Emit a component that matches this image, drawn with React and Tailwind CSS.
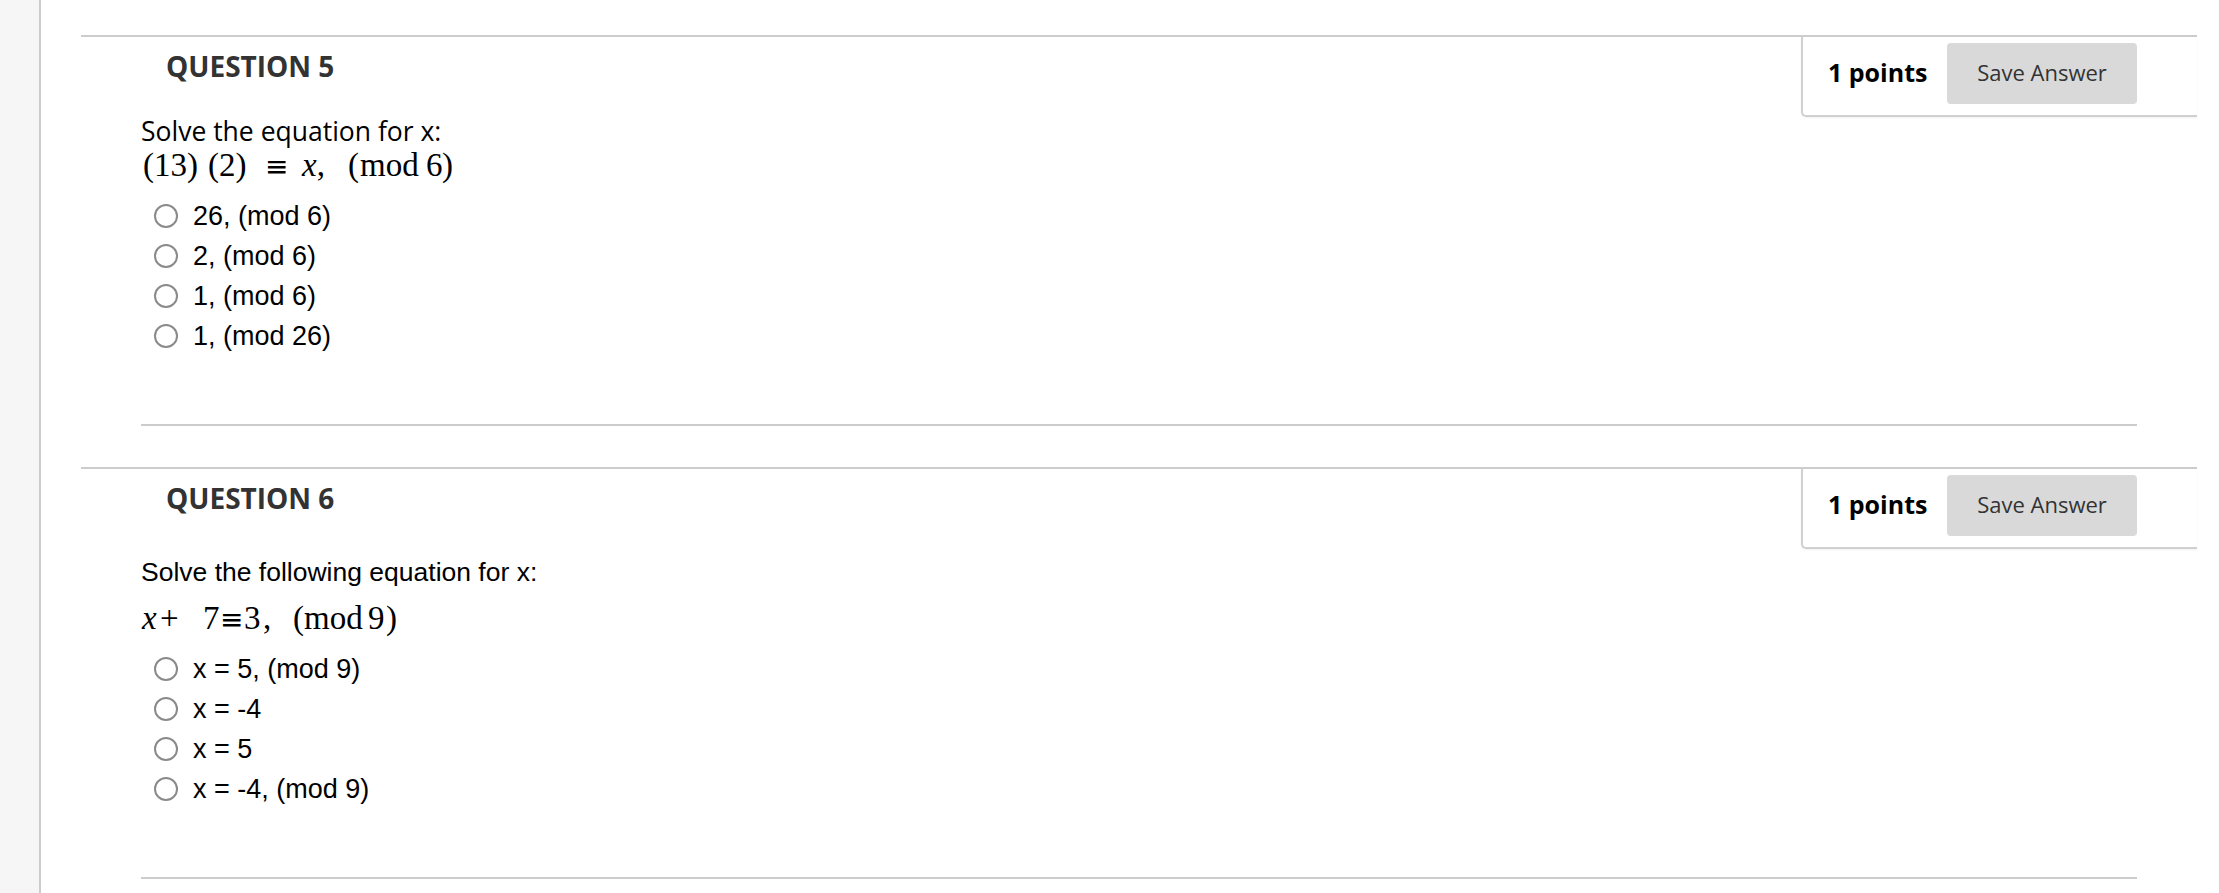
import React from "react";

const OPEN = "font-['Open_Sans',sans-serif]";
const ARIAL = "font-['Liberation_Sans',Arial,sans-serif]";
const SERIF = "font-['Liberation_Serif','Times_New_Roman',serif]";
const EQUIV = "font-['DejaVu_Sans',sans-serif] text-[28px]";

function PointsBox() {
  return (
    <div className={`flex w-[396px] shrink-0 items-center rounded-bl-[5px] border-b-2 border-l-2 border-[#d0d0d0] pb-[11px] pl-[25px] pr-[60px] pt-[6px] shadow-[0_1px_2px_rgba(0,0,0,0.06)] ${OPEN}`}>
      <span className="-mt-[3px] text-[25px] font-bold leading-none text-black">1 points</span>
      <button className="ml-auto h-[61px] w-[190px] rounded-[4px] bg-[#d9d9d9] pb-[3px] text-[22px] leading-none text-[#333333]">
        Save Answer
      </button>
    </div>
  );
}

function Radio() {
  return <span className="h-[24px] w-[24px] shrink-0 rounded-full border-2 border-[#8a8a8a] bg-white" />;
}

function Options({ items }) {
  return (
    <div className="flex flex-col pl-[13px]">
      {items.map((t) => (
        <label key={t} className="flex h-[40px] items-center gap-[15px]">
          <Radio />
          <span className={`${ARIAL} text-[27px] leading-[40px] text-black`}>{t}</span>
        </label>
      ))}
    </div>
  );
}

function Tok({ w, children, cls = "" }) {
  return (
    <span className={`inline-block ${cls}`} style={w ? { width: w } : undefined}>
      {children}
    </span>
  );
}

function Question({ num, children }) {
  return (
    <section className="border-t-2 border-[#cccccc]">
      <div className="flex items-start justify-between">
        <h2 className={`${OPEN} mt-[15px] pl-[85px] text-[28px] font-bold leading-[28px] text-[#333333]`}>
          QUESTION {num}
        </h2>
        <PointsBox />
      </div>
      <div className="px-[60px]">
        {children}
        <div className="mt-[68px] h-[2px] bg-[#cccccc]" />
      </div>
    </section>
  );
}

export default function App() {
  return (
    <div className="flex min-h-[893px] w-full bg-white">
      <div className="w-[41px] shrink-0 border-r-2 border-[#cccccc] bg-[#f6f6f6]" />
      <main className="flex-1 pl-[40px] pr-[22px] pt-[35px]">
        <Question num={5}>
          <p className={`${OPEN} text-[26.5px] leading-[28px] text-black`}>Solve the equation for x:</p>
          <div className={`${SERIF} whitespace-nowrap pl-[2px] text-[33px] leading-[40px] text-black`}>
            <Tok w={65}>(13)</Tok>
            <Tok w={57}>(2)</Tok>
            <Tok w={37} cls={EQUIV}>≡</Tok>
            <Tok w={46}>
              <span className="italic">x</span>,
            </Tok>
            <Tok w={12}>(</Tok>
            <Tok w={66}>mod</Tok>
            <Tok w={16}>6</Tok>
            <Tok>)</Tok>
          </div>
          <div className="mt-[9px]">
            <Options items={["26, (mod 6)", "2, (mod 6)", "1, (mod 6)", "1, (mod 26)"]} />
          </div>
        </Question>

        <div className="mt-[41px]">
          <Question num={6}>
            <p className={`${ARIAL} mt-[7px] text-[26.5px] leading-[32px] text-black`}>
              Solve the following equation for x:
            </p>
            <div className={`${SERIF} mt-[10px] whitespace-nowrap pl-[1px] text-[33px] leading-[40px] text-black`}>
              <Tok w={18} cls="italic">x</Tok>
              <Tok w={43}>+</Tok>
              <Tok w={17}>7</Tok>
              <Tok w={24} cls={EQUIV}>≡</Tok>
              <Tok w={19}>3</Tok>
              <Tok w={30}>,</Tok>
              <Tok w={11}>(</Tok>
              <Tok w={64}>mod</Tok>
              <Tok w={18}>9</Tok>
              <Tok>)</Tok>
            </div>
            <div className="mt-[9px]">
              <Options items={["x = 5, (mod 9)", "x = -4", "x = 5", "x = -4, (mod 9)"]} />
            </div>
          </Question>
        </div>
      </main>
    </div>
  );
}
